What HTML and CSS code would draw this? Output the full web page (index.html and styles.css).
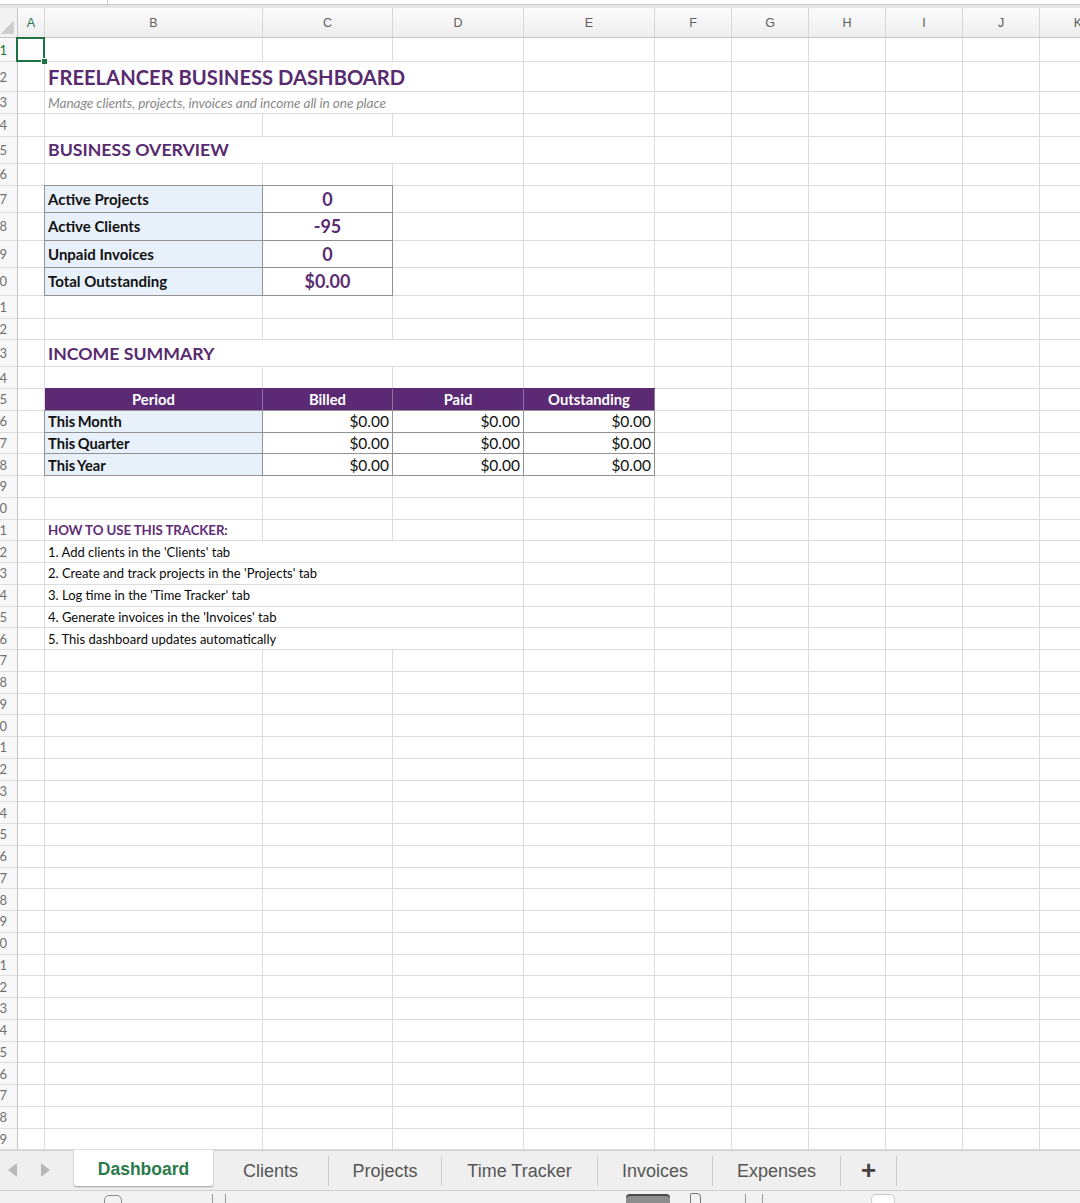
FILE: index.html
```html
<!DOCTYPE html>
<html lang="en">
<head>
  <meta charset="UTF-8">
  <title>Freelancer Business Dashboard</title>
  <link rel="stylesheet" href="styles.css">
</head>
<body>
  <div class="window">
    <!-- bottom edge of the formula bar -->
    <div class="formula-edge"><span class="name-box"></span></div>

    <!-- Worksheet -->
    <div class="sheet">
      <table class="grid">
        <colgroup>
          <col class="c-num"><col class="c-a"><col class="c-b"><col class="c-c"><col class="c-d"><col class="c-e">
          <col class="c-f"><col class="c-f"><col class="c-f"><col class="c-f"><col class="c-f"><col class="c-f">
        </colgroup>
        <tr class="r-head">
          <th class="corner"></th><th class="col sel">A</th><th class="col">B</th><th class="col">C</th><th class="col">D</th><th class="col">E</th>
          <th class="col">F</th><th class="col">G</th><th class="col">H</th><th class="col">I</th><th class="col">J</th><th class="col">K</th>
        </tr>
        <tr class="r-first"><th class="num sel">1</th><td></td><td></td><td></td><td></td><td></td><td></td><td></td><td></td><td></td><td></td><td></td></tr>
        <tr class="r-title"><th class="num">2</th><td></td><td colspan="3" class="title">FREELANCER BUSINESS DASHBOARD</td><td></td><td></td><td></td><td></td><td></td><td></td><td></td></tr>
        <tr><th class="num">3</th><td></td><td colspan="3" class="subtitle">Manage clients, projects, invoices and income all in one place</td><td></td><td></td><td></td><td></td><td></td><td></td><td></td></tr>
        <tr class="r-gap"><th class="num">4</th><td></td><td></td><td></td><td></td><td></td><td></td><td></td><td></td><td></td><td></td><td></td></tr>
        <tr class="r-section"><th class="num">5</th><td></td><td colspan="3" class="section">BUSINESS OVERVIEW</td><td></td><td></td><td></td><td></td><td></td><td></td><td></td></tr>
        <tr><th class="num">6</th><td></td><td></td><td></td><td></td><td></td><td></td><td></td><td></td><td></td><td></td><td></td></tr>

        <!-- overview figures -->
        <tr class="r-stat"><th class="num">7</th><td></td><td class="label boxed">Active Projects</td><td class="stat boxed">0</td><td></td><td></td><td></td><td></td><td></td><td></td><td></td><td></td></tr>
        <tr class="r-stat"><th class="num">8</th><td></td><td class="label boxed">Active Clients</td><td class="stat boxed">-95</td><td></td><td></td><td></td><td></td><td></td><td></td><td></td><td></td></tr>
        <tr class="r-stat"><th class="num">9</th><td></td><td class="label boxed">Unpaid Invoices</td><td class="stat boxed">0</td><td></td><td></td><td></td><td></td><td></td><td></td><td></td><td></td></tr>
        <tr class="r-stat"><th class="num">10</th><td></td><td class="label boxed">Total Outstanding</td><td class="stat boxed">$0.00</td><td></td><td></td><td></td><td></td><td></td><td></td><td></td><td></td></tr>

        <tr class="r-gap"><th class="num">11</th><td></td><td></td><td></td><td></td><td></td><td></td><td></td><td></td><td></td><td></td><td></td></tr>
        <tr><th class="num">12</th><td></td><td></td><td></td><td></td><td></td><td></td><td></td><td></td><td></td><td></td><td></td></tr>
        <tr class="r-section"><th class="num">13</th><td></td><td colspan="3" class="section">INCOME SUMMARY</td><td></td><td></td><td></td><td></td><td></td><td></td><td></td></tr>
        <tr><th class="num">14</th><td></td><td></td><td></td><td></td><td></td><td></td><td></td><td></td><td></td><td></td><td></td></tr>

        <!-- income table -->
        <tr><th class="num">15</th><td></td><td class="head">Period</td><td class="head">Billed</td><td class="head">Paid</td><td class="head">Outstanding</td><td></td><td></td><td></td><td></td><td></td><td></td></tr>
        <tr><th class="num">16</th><td></td><td class="label small boxed">This Month</td><td class="money boxed">$0.00</td><td class="money boxed">$0.00</td><td class="money boxed">$0.00</td><td></td><td></td><td></td><td></td><td></td><td></td></tr>
        <tr><th class="num">17</th><td></td><td class="label small boxed">This Quarter</td><td class="money boxed">$0.00</td><td class="money boxed">$0.00</td><td class="money boxed">$0.00</td><td></td><td></td><td></td><td></td><td></td><td></td></tr>
        <tr><th class="num">18</th><td></td><td class="label small boxed">This Year</td><td class="money boxed">$0.00</td><td class="money boxed">$0.00</td><td class="money boxed">$0.00</td><td></td><td></td><td></td><td></td><td></td><td></td></tr>

        <tr><th class="num">19</th><td></td><td></td><td></td><td></td><td></td><td></td><td></td><td></td><td></td><td></td><td></td></tr>
        <tr><th class="num">20</th><td></td><td></td><td></td><td></td><td></td><td></td><td></td><td></td><td></td><td></td><td></td></tr>

        <!-- instructions -->
        <tr><th class="num">21</th><td></td><td class="howto">HOW TO USE THIS TRACKER:</td><td></td><td></td><td></td><td></td><td></td><td></td><td></td><td></td><td></td></tr>
        <tr><th class="num">22</th><td></td><td colspan="3" class="step">1. Add clients in the 'Clients' tab</td><td></td><td></td><td></td><td></td><td></td><td></td><td></td></tr>
        <tr><th class="num">23</th><td></td><td colspan="3" class="step">2. Create and track projects in the 'Projects' tab</td><td></td><td></td><td></td><td></td><td></td><td></td><td></td></tr>
        <tr><th class="num">24</th><td></td><td colspan="3" class="step">3. Log time in the 'Time Tracker' tab</td><td></td><td></td><td></td><td></td><td></td><td></td><td></td></tr>
        <tr><th class="num">25</th><td></td><td colspan="3" class="step">4. Generate invoices in the 'Invoices' tab</td><td></td><td></td><td></td><td></td><td></td><td></td><td></td></tr>
        <tr><th class="num">26</th><td></td><td colspan="3" class="step">5. This dashboard updates automatically</td><td></td><td></td><td></td><td></td><td></td><td></td><td></td></tr>

        <tr><th class="num">27</th><td></td><td></td><td></td><td></td><td></td><td></td><td></td><td></td><td></td><td></td><td></td></tr>
        <tr><th class="num">28</th><td></td><td></td><td></td><td></td><td></td><td></td><td></td><td></td><td></td><td></td><td></td></tr>
        <tr><th class="num">29</th><td></td><td></td><td></td><td></td><td></td><td></td><td></td><td></td><td></td><td></td><td></td></tr>
        <tr><th class="num">30</th><td></td><td></td><td></td><td></td><td></td><td></td><td></td><td></td><td></td><td></td><td></td></tr>
        <tr><th class="num">31</th><td></td><td></td><td></td><td></td><td></td><td></td><td></td><td></td><td></td><td></td><td></td></tr>
        <tr><th class="num">32</th><td></td><td></td><td></td><td></td><td></td><td></td><td></td><td></td><td></td><td></td><td></td></tr>
        <tr><th class="num">33</th><td></td><td></td><td></td><td></td><td></td><td></td><td></td><td></td><td></td><td></td><td></td></tr>
        <tr><th class="num">34</th><td></td><td></td><td></td><td></td><td></td><td></td><td></td><td></td><td></td><td></td><td></td></tr>
        <tr><th class="num">35</th><td></td><td></td><td></td><td></td><td></td><td></td><td></td><td></td><td></td><td></td><td></td></tr>
        <tr><th class="num">36</th><td></td><td></td><td></td><td></td><td></td><td></td><td></td><td></td><td></td><td></td><td></td></tr>
        <tr><th class="num">37</th><td></td><td></td><td></td><td></td><td></td><td></td><td></td><td></td><td></td><td></td><td></td></tr>
        <tr><th class="num">38</th><td></td><td></td><td></td><td></td><td></td><td></td><td></td><td></td><td></td><td></td><td></td></tr>
        <tr><th class="num">39</th><td></td><td></td><td></td><td></td><td></td><td></td><td></td><td></td><td></td><td></td><td></td></tr>
        <tr><th class="num">40</th><td></td><td></td><td></td><td></td><td></td><td></td><td></td><td></td><td></td><td></td><td></td></tr>
        <tr><th class="num">41</th><td></td><td></td><td></td><td></td><td></td><td></td><td></td><td></td><td></td><td></td><td></td></tr>
        <tr><th class="num">42</th><td></td><td></td><td></td><td></td><td></td><td></td><td></td><td></td><td></td><td></td><td></td></tr>
        <tr><th class="num">43</th><td></td><td></td><td></td><td></td><td></td><td></td><td></td><td></td><td></td><td></td><td></td></tr>
        <tr><th class="num">44</th><td></td><td></td><td></td><td></td><td></td><td></td><td></td><td></td><td></td><td></td><td></td></tr>
        <tr><th class="num">45</th><td></td><td></td><td></td><td></td><td></td><td></td><td></td><td></td><td></td><td></td><td></td></tr>
        <tr><th class="num">46</th><td></td><td></td><td></td><td></td><td></td><td></td><td></td><td></td><td></td><td></td><td></td></tr>
        <tr><th class="num">47</th><td></td><td></td><td></td><td></td><td></td><td></td><td></td><td></td><td></td><td></td><td></td></tr>
        <tr><th class="num">48</th><td></td><td></td><td></td><td></td><td></td><td></td><td></td><td></td><td></td><td></td><td></td></tr>
        <tr><th class="num">49</th><td></td><td></td><td></td><td></td><td></td><td></td><td></td><td></td><td></td><td></td><td></td></tr>
      </table>

      <!-- active cell A1 -->
      <div class="selection"><span class="fill-handle"></span></div>
    </div>

    <!-- Sheet tabs -->
    <div class="tabbar">
      <div class="tab-nav">
        <svg width="10" height="14" viewBox="0 0 10 14"><polygon points="9,0 9,14 0,7" fill="#b8b8b8"/></svg>
        <svg width="10" height="14" viewBox="0 0 10 14"><polygon points="1,0 1,14 10,7" fill="#b8b8b8"/></svg>
      </div>
      <div class="tab active">Dashboard</div>
      <div class="tab t-clients">Clients</div>
      <div class="tab t-projects">Projects</div>
      <div class="tab t-time">Time Tracker</div>
      <div class="tab t-invoices">Invoices</div>
      <div class="tab t-expenses">Expenses</div>
      <div class="tab add">+</div>
    </div>

    <!-- Status bar (mostly cut off) -->
    <div class="statusbar">
      <span class="sb-gear"></span>
      <span class="sb-ticks"></span>
      <span class="sb-view on"></span>
      <span class="sb-page"></span>
      <span class="sb-ticks two"></span>
      <span class="sb-knob"></span>
    </div>
  </div>
</body>
</html>
```

FILE: styles.css
```css
/* Global */
* {
  box-sizing: border-box;
}
body {
  margin: 0;
  width: 1080px;
  height: 1203px;
  overflow: hidden;
  background-color: #fff;
  font-family: Lato, "Liberation Sans", sans-serif;
  color: #111;
}
.window {
  display: flex;
  flex-direction: column;
  height: 1203px;
}

/* Formula bar edge */
.formula-edge {
  height: 8px;
  background-color: #fff;
  border-top: 4px solid #fff;
  border-bottom: 3px solid #e4e4e4;
  box-shadow: inset 0 -1px 0 #c9c9c9;
  position: relative;
}
.name-box {
  position: absolute;
  left: 107px;
  top: -4px;
  width: 1px;
  height: 4px;
  background-color: #c9c9c9;
}

/* Worksheet grid */
.sheet {
  position: relative;
  height: 1142px;
  overflow: hidden;
}
.grid {
  border-collapse: separate;
  border-spacing: 0;
  table-layout: fixed;
  width: 1117px;
  font-size: 13px;
}
.c-num { width: 18px; }
.c-a { width: 27px; }
.c-b { width: 218px; }
.c-c { width: 130px; }
.c-d { width: 131px; }
.c-e { width: 131px; }
.c-f { width: 77px; }

.grid tr { height: 21.75px; }
.grid .r-head { height: 30px; }
.grid .r-first { height: 24px; }
.grid .r-title { height: 30px; }
.grid .r-gap { height: 23px; }
.grid .r-section { height: 27px; }
.grid .r-stat { height: 27.5px; }

.grid td,
.grid th {
  border-right: 1px solid #dcdcdc;
  border-bottom: 1px solid #dcdcdc;
  padding: 0 3px;
  white-space: nowrap;
  overflow: hidden;
  vertical-align: middle;
}
.grid th {
  font-weight: 400;
}

/* Column / row headings */
.grid th.corner {
  background: linear-gradient(to top left, #cdcdcd 50%, transparent 50%) right 3px bottom 3px / 13px 14px no-repeat, #f3f3f3;
  border-bottom-color: #c4c4c4;
  border-right-color: #c4c4c4;
}
.grid th.col {
  background: linear-gradient(#fbfbfb, #eeeeee);
  border-bottom-color: #c4c4c4;
  border-right-color: #d6d6d6;
  font-family: "Liberation Sans", sans-serif;
  font-size: 12.5px;
  color: #5e5e5e;
  text-align: center;
  padding-top: 1px;
}
.grid th.num {
  background-color: #f8f8f8;
  border-right-color: #c4c4c4;
  border-bottom-color: #dedede;
  font-size: 13px;
  color: #6f6f6f;
  direction: rtl;
  text-align: right;
  padding: 0 11px 0 0;
}
.grid th.sel {
  color: #217346;
}

/* Headings */
.title {
  font-size: 20.2px;
  font-weight: 700;
  color: #582b6f;
  padding-top: 2px;
}
.subtitle {
  font-size: 13.7px;
  font-style: italic;
  color: #8a8a8a;
  letter-spacing: -0.1px;
}
.section {
  font-size: 17.7px;
  font-weight: 700;
  color: #582b6f;
}
.howto {
  font-size: 13.3px;
  font-weight: 700;
  color: #5f2d78;
  letter-spacing: -0.1px;
}
.step {
  font-size: 13px;
  color: #0a0a0a;
}

/* Boxed tables */
.grid td.boxed {
  border-right-color: #929292;
  border-bottom-color: #929292;
  box-shadow: -1px 0 0 #929292, 0 -1px 0 #929292, -1px -1px 0 #929292;
}
.label {
  background-color: #e8f0fa;
  font-size: 15px;
  font-weight: 700;
  color: #111;
}
.label.small {
  font-size: 14.7px;
  word-spacing: -1px;
}
.stat {
  text-align: center;
  font-size: 18px;
  font-weight: 700;
  color: #5a2d72;
}
.money {
  text-align: right;
  font-size: 15.5px;
  color: #111;
}
.grid td.head {
  background-color: #5c2a74;
  border-right-color: #8f72a3;
  border-bottom-color: #d4c8dc;
  box-shadow: 0 -1px 0 #5c2a74;
  color: #fff;
  font-size: 14.8px;
  font-weight: 700;
  text-align: center;
}

/* Active cell */
.selection {
  position: absolute;
  left: 16px;
  top: 29px;
  width: 29px;
  height: 25px;
  border: 2px solid #1f7244;
}
.fill-handle {
  position: absolute;
  right: -5px;
  bottom: -5px;
  width: 7px;
  height: 7px;
  background-color: #1f7244;
  border: 1px solid #fff;
}

/* Sheet tabs */
.tabbar {
  height: 40px;
  display: flex;
  align-items: flex-start;
  background-color: #efefef;
  border-top: 1px solid #d2d2d2;
  font-family: "Liberation Sans", sans-serif;
  font-size: 18px;
  color: #555;
}
.tab-nav {
  width: 74px;
  height: 38px;
  display: flex;
  align-items: center;
  gap: 22px;
  padding-left: 8px;
}
.tab {
  height: 30px;
  margin-top: 5px;
  display: flex;
  align-items: center;
  justify-content: center;
  border-right: 1px solid #cbcbcb;
}
.tab.active {
  width: 139px;
  height: 36px;
  margin-top: -1px;
  padding-top: 3px;
  background-color: #fff;
  border-right: none;
  border-radius: 0 0 3px 3px;
  box-shadow: 0 1px 2px rgba(0, 0, 0, 0.35);
  color: #2b7a4b;
  font-weight: 700;
  font-size: 17.5px;
}
.t-clients { width: 116px; }
.t-projects { width: 113px; }
.t-time { width: 156px; }
.t-invoices { width: 115px; }
.t-expenses { width: 128px; }
.tab.add {
  width: 56px;
  font-size: 26px;
  font-weight: 700;
  color: #444;
  padding-bottom: 2px;
}

/* Status bar */
.statusbar {
  height: 13px;
  display: flex;
  align-items: flex-start;
  background-color: #f2f2f2;
  border-top: 1px solid #d0d0d0;
  overflow: hidden;
}
.sb-gear {
  margin: 4px 0 0 104px;
  width: 18px;
  height: 14px;
  border: 1.5px solid #8a8a8a;
  border-radius: 5px;
}
.sb-ticks {
  margin: 3px 0 0 90px;
  width: 14px;
  height: 10px;
  border-left: 1px solid #9a9a9a;
  border-right: 1px solid #9a9a9a;
}
.sb-view {
  margin: 3px 0 0 400px;
  width: 44px;
  height: 14px;
  border-radius: 4px;
  background-color: #8d8d8d;
  box-shadow: inset 0 3px 0 -1px #4a4a4a;
}
.sb-page {
  margin: 2px 0 0 20px;
  width: 11px;
  height: 12px;
  border: 1.5px solid #777;
  border-radius: 2px 4px 0 0;
}
.sb-ticks.two {
  margin-left: 44px;
  width: 18px;
}
.sb-knob {
  margin: 3px 0 0 108px;
  width: 24px;
  height: 12px;
  background-color: #fff;
  border: 1px solid #c8c8c8;
  border-radius: 5px;
}
```
